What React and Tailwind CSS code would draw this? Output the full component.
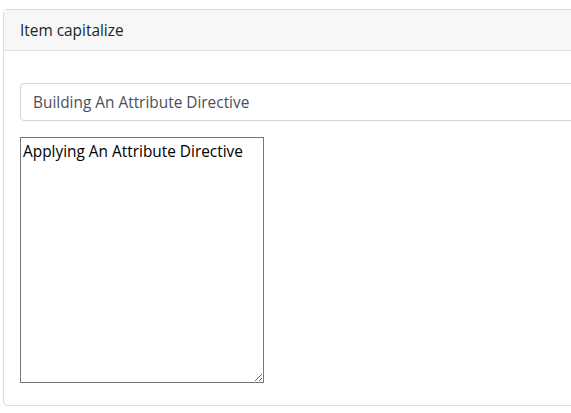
import React, { useState } from 'react'

const App = () => {
    const [title, setTitle] = useState('Building An Attribute Directive')
    const [text, setText] = useState('Applying An Attribute Directive')

    return (
        <div className="w-full min-h-[413px] overflow-hidden bg-white pt-[9px] pl-[3px] font-['Open_Sans',sans-serif]">
            <div className="w-[620px] rounded-[4px] border border-[#dcdcdc] text-[#212529]">
                <div className="h-[41px] border-b border-[#dfdfdf] bg-[#f7f7f7] px-4 pt-[2px] text-[15.4px] leading-[38px]">
                    Item capitalize
                </div>
                <div className="p-4">
                    <input
                        type="text"
                        value={title}
                        onChange={(e) => setTitle(e.target.value)}
                        className="mt-4 block h-[38px] w-full rounded-[4px] border border-[#ced4da] px-3 text-[15.4px] text-[#495057] outline-none"
                    />
                    <textarea
                        value={text}
                        onChange={(e) => setText(e.target.value)}
                        className="mt-4 h-[246px] w-[244px] border border-[#767676] p-[2px] text-[15.4px] leading-[24px] text-black outline-none"
                    ></textarea>
                </div>
            </div>
        </div>
    )
}

export default App
